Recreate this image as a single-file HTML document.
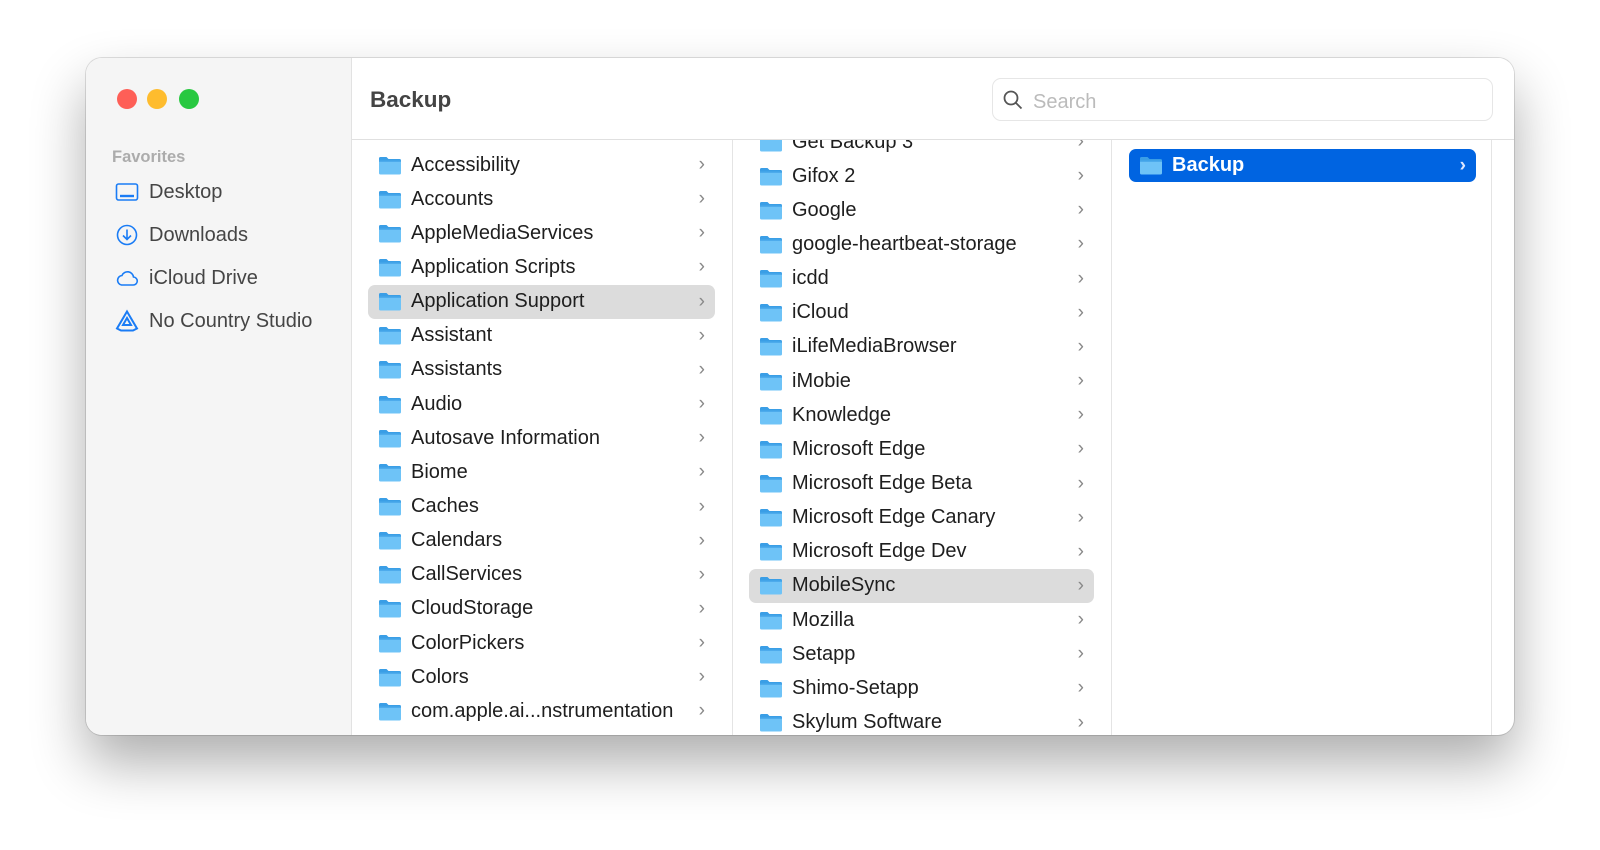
<!DOCTYPE html>
<html><head><meta charset="utf-8"><style>
*{margin:0;padding:0;box-sizing:border-box}
body{width:1600px;height:850px;background:#fff;position:relative;overflow:hidden;font-family:"Liberation Sans",sans-serif}
.win{position:absolute;left:86px;top:58px;width:1428px;height:677px;border-radius:16px;background:#fff;overflow:hidden;box-shadow:0 28px 55px rgba(0,0,0,.32),0 0 0 1px rgba(0,0,0,.12)}
.side{position:absolute;left:0;top:0;width:266px;height:100%;background:#f5f5f5;border-right:1px solid #e2e2e2}
.tl{position:absolute;top:31px;width:20px;height:20px;border-radius:50%}
.fav{position:absolute;left:26px;top:90px;font-size:16.5px;font-weight:bold;color:#acacac}
.si{position:absolute;left:29px;display:flex;align-items:center;font-size:20px;color:#454545}
.si svg{width:24px;height:24px;margin-right:10px}
.hdr{position:absolute;left:266px;top:0;right:0;height:82px;border-bottom:1px solid #e0e0e0;background:#fff}
.title{position:absolute;left:18px;top:29px;font-size:22.5px;font-weight:bold;color:#444}
.search{position:absolute;left:640px;top:20px;width:501px;height:43px;border:1px solid #e6e6e6;border-radius:9px}
.search span{position:absolute;left:40px;top:12px;font-size:20px;color:#bbb}
.col{position:absolute;top:82px;bottom:0;overflow:hidden}
.row{position:absolute;height:34px;display:flex;align-items:center;font-size:20px;color:#1e1e1e;border-radius:7px}
.row .f{width:24px;height:19px;margin-right:9px;flex:none}
.row .c{position:absolute;color:#888;font-size:19px}
.sel{background:#dcdcdc}
.blue{background:#0064e1;color:#fff}
.blue .c{color:#dfe8ff}
</style></head><body>
<div class="win">
 <div class="side">
  <div class="tl" style="left:31px;background:#fe5f57"></div>
  <div class="tl" style="left:61px;background:#febc2e"></div>
  <div class="tl" style="left:93px;background:#28c840"></div>
  <div class="fav">Favorites</div>
  <div class="si" style="top:122px"><svg viewBox="0 0 24 24" fill="none" stroke="#1a7cf5" stroke-width="1.6"><rect x="1.5" y="4" width="21" height="16" rx="2"/><line x1="5" y1="16" x2="19" y2="16" stroke-width="2.4"/></svg>Desktop</div>
  <div class="si" style="top:165px"><svg viewBox="0 0 24 24" fill="none" stroke="#1a7cf5" stroke-width="1.6"><circle cx="12" cy="12" r="9.5"/><path d="M12 6.5v10M8 12.5l4 4 4-4"/></svg>Downloads</div>
  <div class="si" style="top:208px"><svg viewBox="0 0 24 24" fill="none" stroke="#1a7cf5" stroke-width="1.6"><path d="M6.5 19h11.5a4 4 0 0 0 .5-8 6 6 0 0 0-11.5-1.5A4.8 4.8 0 0 0 6.5 19z"/></svg>iCloud Drive</div>
  <div class="si" style="top:251px"><svg viewBox="0 0 24 24" fill="none" stroke="#1a7cf5" stroke-width="2"><path d="M12 2.5 22 19.5 18 21.5H6L2 19.5z"/><path d="M12 9 16 16H8z"/></svg>No Country Studio</div>
 </div>
 <div class="hdr">
  <div class="title">Backup</div>
  <div class="search"><svg style="position:absolute;left:9px;top:10px" width="22" height="22" viewBox="0 0 22 22" fill="none" stroke="#555" stroke-width="1.8"><circle cx="9" cy="9" r="6.5"/><path d="M14 14l5.5 5.5"/></svg><span>Search</span></div>
 </div>
 <div class="col" style="left:267px;width:380px;border-right:1px solid #e4e4e4" id="c1"></div>
 <div class="col" style="left:647px;width:379px;border-right:1px solid #e4e4e4" id="c2"></div>
 <div class="col" style="left:1026px;width:380px;border-right:1px solid #e4e4e4" id="c3"></div>
</div>
<svg width="0" height="0" style="position:absolute"><defs><symbol id="fd" viewBox="0 0 24 19"><path d="M1 2.5Q1 1 2.5 1H8.5L10.5 3H21.5Q23 3 23 4.5V5H1z" fill="#3a9ee6"/><rect x="1" y="4.5" width="22" height="14" rx="1.5" fill="#6ec3f7"/><rect x="1" y="4.5" width="22" height="1.4" fill="#4aa9ea"/></symbol></defs></svg>
<script>
function build(id,items,x0,y0,w,sel,cls){
 var c=document.getElementById(id),h='';
 items.forEach(function(t,i){
  var top=y0+i*34.15;
  h+='<div class="row '+(i===sel?cls:'')+'" style="left:'+x0+'px;top:'+top+'px;width:'+w+'px;padding-left:10px"><svg class="f"><use href="#fd"/></svg>'+t+'<span class="c" style="right:10px">&#x203A;</span></div>';
 });
 c.innerHTML=h;
}
build('c1',["Accessibility","Accounts","AppleMediaServices","Application Scripts","Application Support","Assistant","Assistants","Audio","Autosave Information","Biome","Caches","Calendars","CallServices","CloudStorage","ColorPickers","Colors","com.apple.ai...nstrumentation"],15,8,347,4,'sel');
build('c2',["Get Backup 3","Gifox 2","Google","google-heartbeat-storage","icdd","iCloud","iLifeMediaBrowser","iMobie","Knowledge","Microsoft Edge","Microsoft Edge Beta","Microsoft Edge Canary","Microsoft Edge Dev","MobileSync","Mozilla","Setapp","Shimo-Setapp","Skylum Software"],16,-15,345,13,'sel');
build('c3',["Backup"],17,9,347,0,'blue');
document.querySelectorAll('#c3 .row').forEach(function(r){r.style.fontWeight='bold';r.style.height='33px'});
</script>
</body></html>
